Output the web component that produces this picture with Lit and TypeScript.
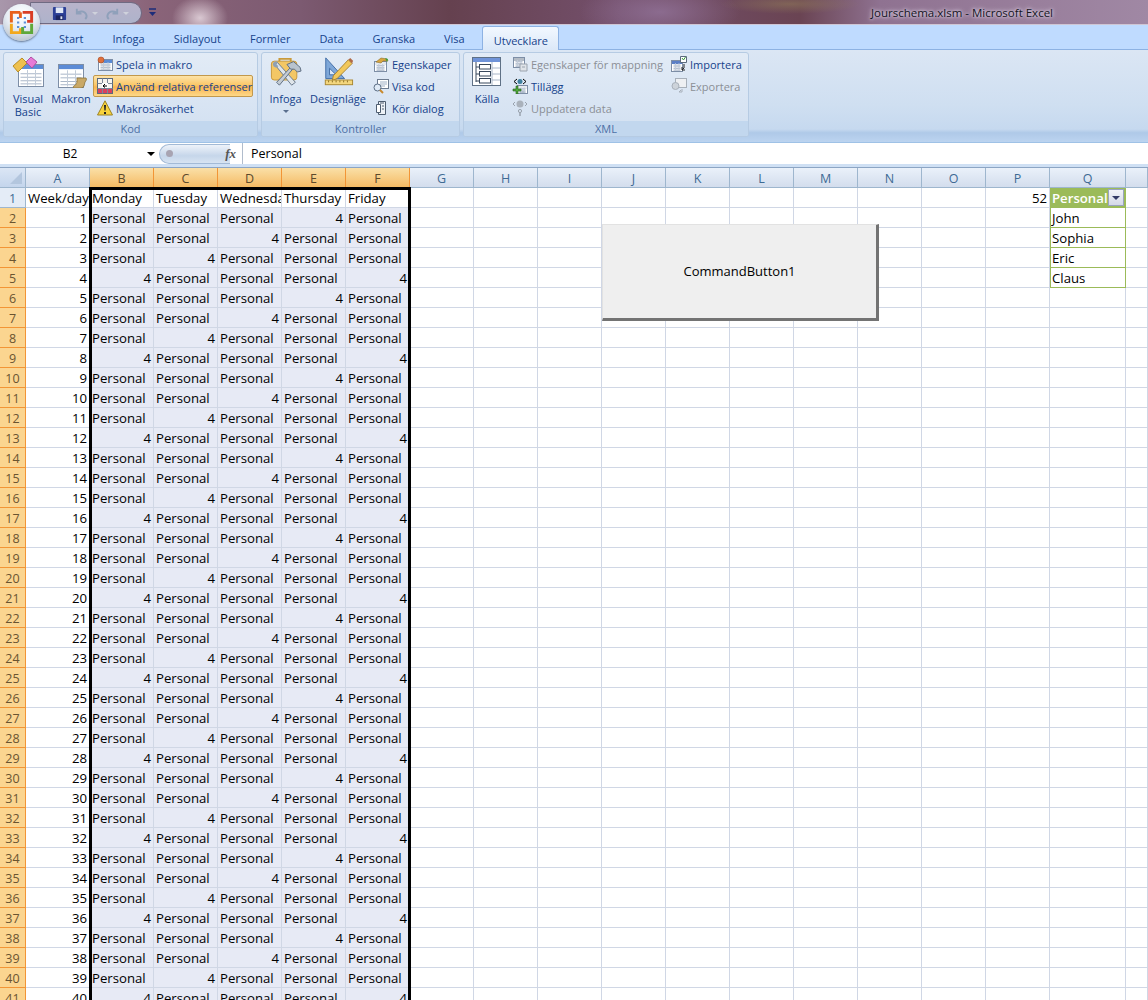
import { LitElement, html, css, svg } from "lit";
import { customElement } from "lit/decorators.js";

const COLS = "ABCDEFGHIJKLMNOPQR".split("");
const ROWS = 41;

const sheetGrid = (x: number, y: number, w: number, h: number, head = "#5b8bd6") => svg`
  <rect x=${x} y=${y} width=${w} height=${h} fill="#fff" stroke="#7d8ea6"/>
  <rect x=${x + 0.5} y=${y + 0.5} width=${w - 1} height=${Math.max(3, h * 0.18)} fill=${head}/>
  ${[0.42, 0.58, 0.74, 0.88].map((f) => svg`<path d="M${x + 2} ${y + h * f}H${x + w - 2}" stroke="#a9b6c8"/>`)}
  ${[0.36, 0.68].map((f) => svg`<path d="M${x + w * f} ${y + h * 0.25}V${y + h - 1}" stroke="#c2ccd9"/>`)}
`;

const icons: Record<string, unknown> = {
  vb: html`<svg class="big" viewBox="0 0 32 32">
    ${sheetGrid(6.5, 8.5, 25, 22)}
    <path d="M1 10 10 2l5 5-9 9z" fill="#eec04e" stroke="#b98d24"/>
    <path d="M14 6l5-5 6 5-5 6z" fill="#e77ad6" stroke="#b04fa4"/>
  </svg>`,
  macro: html`<svg class="big" viewBox="0 0 32 32">
    ${sheetGrid(3.5, 8.5, 25, 23)}
    <path d="M22 22h9c1 1 0 3-1 4l-1 4c-1 2-3 2-4 2h-6c-1 0-1-2 0-2 2-1 3-3 3-5 0-1 0-2 0-3z" fill="#c9a866" stroke="#8a7138" stroke-width=".8"/>
  </svg>`,
  infoga: html`<svg class="big" viewBox="0 0 34 32">
    <path d="M10 5V2h12v3" fill="none" stroke="#c99a3a" stroke-width="2"/>
    <rect x="1.500" y="4.500" width="27" height="20" rx="3" fill="#f3c765" stroke="#c6963a"/>
    <path d="M5 8l3-2 19 21-4 3z" fill="#dfe5ea" stroke="#66768a"/>
    <path d="M7 27 22 11l2 2L10 30z" fill="#c4ccd4" stroke="#5c6c80"/>
    <path d="M18 8l7-3 7 6 1 4-4 1-3-3-4 0z" fill="#b8c3ce" stroke="#5c6c80"/>
    <path d="M3 8a3.500 3.500 0 0 1 5-3L7 8l2 2a3.500 3.500 0 0 1-6-2z" fill="#8ea0b4"/>
  </svg>`,
  design: html`<svg class="big" viewBox="0 0 34 32">
    <path d="M4 1v22h20z" fill="#7ea7d8" stroke="#3f6ba5"/>
    <path d="M8 12v7h7z" fill="#dce8f6" stroke="#3f6ba5"/>
    <path d="M12 20 28 3l4 4-16 16-5 2z" fill="#f2c85b" stroke="#a8812c"/>
    <path d="M28 3l2-2 3 3-1 3z" fill="#b06a48"/>
    <rect x="3.500" y="24.500" width="29" height="5" fill="#f4d77f" stroke="#a8862f"/>
    <path d="M7 25v2M11 25v2M15 25v2M19 25v2M23 25v2M27 25v2" stroke="#8a6d22"/>
  </svg>`,
  source: html`<svg class="big" viewBox="0 0 32 32">
    <rect x="1.500" y="1.500" width="28" height="28" fill="#fff" stroke="#5f7186"/>
    <rect x="2" y="2" width="27" height="4" fill="#6f93d8"/>
    <path d="M21 6v23M21 12h8M21 18h8M21 24h8" stroke="#a9b6c8"/>
    <path d="M5 6v20M5 11h3M5 18h3M5 25h3" stroke="#39485c" fill="none"/>
    <rect x="8.500" y="8.500" width="11" height="4.500" fill="#fff" stroke="#39485c"/>
    <rect x="8.500" y="15.500" width="11" height="4.500" fill="#fff" stroke="#39485c"/>
    <rect x="8.500" y="22.500" width="11" height="4.500" fill="#fff" stroke="#39485c"/>
  </svg>`,
  rec: html`<svg class="small" viewBox="0 0 16 16">
    ${sheetGrid(1.5, 3.5, 14, 11)}<circle cx="4" cy="4" r="3" fill="#e0703c" stroke="#a84a20" stroke-width=".6"/>
  </svg>`,
  rel: html`<svg class="small" viewBox="0 0 16 16">
    <rect x=".5" y=".5" width="15" height="15" fill="#f6f3ee" stroke="#5a6a7e"/>
    <path d="M.5 5.500h15M.5 10.500h15M5.500 .5v15M10.500 .5v15" stroke="#7b8798"/>
    <rect x="1" y="11" width="4" height="4" fill="#d8405e"/><rect x="6" y="11" width="4" height="4" fill="#d8405e"/><rect x="11" y="11" width="4" height="4" fill="#d8405e"/>
    <rect x="5" y="5" width="6" height="5" fill="#fff"/><path d="M10 8H6l2-2M6 8l2 1.500" stroke="#000" fill="none"/>
  </svg>`,
  warn: html`<svg class="small" viewBox="0 0 16 16">
    <path d="M8 .8 15.500 15H.5z" fill="#f7d23c" stroke="#9c8326"/><path d="M7 5h2l-.4 5.500h-1.200zM7 12h2v2H7z" fill="#222"/>
  </svg>`,
  props: html`<svg class="small" viewBox="0 0 16 16">
    ${sheetGrid(1.5, 5.5, 12, 10, "#e4e9f0")}<path d="M3 6l5-4 6 1 1 2-5 0-2 2z" fill="#d9a63f" stroke="#8d6d25" stroke-width=".6"/><path d="M12 2l3 1-1 3" fill="#3e9d3e"/>
  </svg>`,
  code: html`<svg class="small" viewBox="0 0 16 16">
    <rect x="4.500" y="1.500" width="11" height="9" fill="#fff" stroke="#6d7c90"/><path d="M7 4h7M7 6h7M7 8h5" stroke="#9fb0c5"/>
    <circle cx="4.500" cy="9.500" r="3.500" fill="#dfeaf6" stroke="#5d6f86"/><path d="M7 12l3 3" stroke="#c98a2c" stroke-width="2"/>
  </svg>`,
  dlg: html`<svg class="small" viewBox="0 0 16 16">
    <path d="M5.500 1.500h7v13h-7z" fill="#eef2f6" stroke="#4e5d70"/><path d="M3.500 4.500h4v8h-4z" fill="#fff" stroke="#4e5d70"/><path d="M7 3h4M9 6h2M9 9h2" stroke="#4e5d70"/>
  </svg>`,
  map: html`<svg class="small" viewBox="0 0 16 16">
    ${sheetGrid(1.5, 1.5, 11, 10, "#b4bcc6")}<path d="M8 8h7v7H8z" fill="#dfe3e8" stroke="#9aa3ae"/><path d="M10 11h3" stroke="#9aa3ae"/>
  </svg>`,
  addin: html`<svg class="small" viewBox="0 0 16 16">
    <path d="M2 3.500 5 1M2 3.500 5 6M14 3.500 11 1M14 3.500 11 6" stroke="#000" fill="none"/><circle cx="8" cy="3.500" r="2.500" fill="#3f7f9e"/>
    ${sheetGrid(5.5, 7.5, 10, 8, "#e7ebf0")}
    <path d="M1 11h3V8h2v3h3v2H6v3H4v-3H1z" fill="#4fa73a" stroke="#245e1b" stroke-width=".6"/>
  </svg>`,
  refresh: html`<svg class="small" viewBox="0 0 16 16">
    <path d="M3 2 1 4l2 2M13 2l2 2-2 2" stroke="#9aa3ae" fill="none"/><circle cx="8" cy="4" r="3.500" fill="#aab2bc"/><circle cx="8" cy="11" r="1.600" fill="none" stroke="#9aa3ae"/><path d="M8 12.500V16" stroke="#9aa3ae" stroke-width="1.500"/>
  </svg>`,
  imp: html`<svg class="small" viewBox="0 0 16 16">
    ${sheetGrid(0.5, 4.5, 11, 11, "#5b7fc6")}<path d="M9.500 .5h6v6h-6z" fill="#fff" stroke="#5b6a7c"/><path d="M11 2l1.500 2 2-3" stroke="#3c9a3c" fill="none"/><path d="M13 8v4l-2 2M11 11v3h3" stroke="#222" fill="none"/>
  </svg>`,
  exp: html`<svg class="small" viewBox="0 0 16 16">
    <rect x="4.500" y=".5" width="11" height="9" fill="#eef0f3" stroke="#a8b0ba"/><circle cx="4.500" cy="8" r="3.500" fill="#cdd3da" stroke="#a8b0ba"/><path d="M11 11v3H8M8 14l2-2" stroke="#a8b0ba" fill="none"/>
  </svg>`,
};

const corner = (name: string) => icons[name];

@customElement("app-root")
export class AppRoot extends LitElement {
  static styles = css`
    :host { display: block; width: 1148px; height: 1000px; overflow: hidden; position: relative; background: #fff; font-family: "Open Sans", "Noto Sans", sans-serif; color: #000; }
    * { box-sizing: border-box; }

    .title { height: 25px; position: relative; display: flex; align-items: center; justify-content: flex-end; padding: 0 95px 0 0;
      background:
        radial-gradient(28px 22px at 200px 18px, rgba(232,218,226,.85), rgba(232,218,226,0) 100%),
        radial-gradient(70px 10px at 790px 4px, rgba(150,130,90,.5), transparent),
        radial-gradient(80px 30px at 660px 12px, rgba(150,120,160,.7), transparent),
        linear-gradient(90deg, #a897ab 0, #9a7f97 60px, #8a6479 150px, #7c5a71 300px, #65414f 450px, #74506c 620px, #6a4453 800px, #8f7291 880px, #a088a4 1148px);
      border-bottom: 1px solid #cfc6d4; }
    .doc { font-size: 11.500px; color: #14141e; text-shadow: 0 0 5px #e8dff0, 0 0 3px #e8dff0; white-space: pre; }
    .qat { position: absolute; left: 30px; top: 2px; width: 112px; height: 22px; border-radius: 0 11px 11px 0; background: linear-gradient(#b8b3ca, #aeb3cb); border: 1px solid #6f6a82; display: flex; align-items: center; padding-left: 21px; }
    .qat svg { width: 15px; height: 15px; flex: none; }
    .qat .undo { margin-left: 7px; }
    .qat .redo { margin-left: 5px; }
    .qat .drop { width: 10px; height: 10px; margin-left: 1px; }
    .more { position: absolute; left: 148px; top: 8px; width: 9px; height: 10px; }

    .orb { position: absolute; left: 3px; top: 4px; width: 37px; height: 37px; border-radius: 50%; z-index: 5; background: radial-gradient(circle at 50% 30%, #fff 0, #e8eef5 45%, #b8c2cd 85%, #8f9aa8 100%); box-shadow: 0 1px 2px rgba(40,50,70,.6); display: flex; align-items: center; justify-content: center; }
    .orb svg { width: 27px; height: 27px; }

    .tabs { height: 25px; background: #bfdbff; display: flex; align-items: flex-end; padding-left: 44.500px; border-bottom: 1px solid #8db2e3; font-size: 11px; color: #15428b; }
    .tab { padding: 0 14.500px; height: 24px; line-height: 27px; white-space: nowrap; }
    .tab.active { margin-left: 3px; padding: 0 10.500px; height: 24px; margin-bottom: -1px; border: 1px solid #8db2e3; border-bottom: 0; border-radius: 3px 3px 0 0; background: linear-gradient(#f2f8ff, #dbe8f8); }

    .ribbon { height: 92px; padding: 2px 0 0 3px; display: flex; gap: 3px; background: linear-gradient(#dbe6f4, #cfdff1 60%, #c6d9ef 86%, #afc9e8 90%, #bcd4f0); font-size: 11px; color: #15428b; }
    .group { height: 85px; border: 1px solid #b6cbe3; border-radius: 3px; display: flex; flex-direction: column; background: linear-gradient(#e2ebf6, #d2e0f1); }
    .group.kod { width: 255px; } .group.ctl { width: 199px; } .group.xml { width: 286px; }
    .body { height: 68px; display: flex; }
    .cap { height: 15px; line-height: 16px; text-align: center; background: #c2d7ee; color: #4d70a5; font-size: 11px; border-radius: 0 0 2px 2px; }
    .kod .body { padding-left: 4px; } .ctl .body { padding-left: 2px; } .xml .body { padding-left: 3px; }

    .large { display: flex; flex-direction: column; align-items: center; padding-top: 3px; white-space: nowrap; line-height: 13px; text-align: center; flex: none; }
    .large .big { height: 32px; margin-bottom: 4px; width: 32px; }
    .large.w-vb { width: 40px; } .large.w-mac { width: 46px; }
    .large.w-inf { width: 43px; } .large.w-des { width: 62px; } .large.w-src { width: 40px; }
    .arrow { width: 0; height: 0; border: 3px solid transparent; border-top-color: #5a6f8e; border-bottom: 0; margin-top: 5px; }
    .stack { display: flex; flex-direction: column; flex: none; }
    .stack.s-kod { margin-left: -1px; width: 160px; }
    .stack.s-ctl { width: 84px; }
    .stack.s-xml1 { margin-left: 1px; width: 159px; }
    .stack.s-xml2 { width: 76px; }
    .item { height: 22px; display: flex; align-items: center; gap: 3px; padding-left: 3px; white-space: nowrap; border: 1px solid transparent; border-radius: 2px; }
    .item .small { width: 16px; height: 16px; flex: none; }
    .item.on { background: linear-gradient(#fde3a8, #fbc768 45%, #f9b552 55%, #fdd888); border-color: #c2984c; }
    .item.off { color: #8b8f96; }

    .fbar { height: 26px; background: #cfe0f4; border-top: 1px solid #9fc2e6; border-bottom: 1px solid #8ca5c4; display: flex; align-items: flex-start; font-size: 12px; position: relative; }
    .namebox { width: 158px; height: 21px; background: #fff; position: relative; text-align: center; padding-right: 18px; line-height: 21px; }
    .namebox::after { content: ""; position: absolute; right: 3px; top: 9px; border: 4px solid transparent; border-top-color: #000; border-bottom: 0; }
    .fx { width: 85px; height: 21px; background: #fff; display: flex; align-items: center; justify-content: flex-end; padding-right: 6px; border-right: 1px solid #b0bccc; position: relative; }
    .pill { position: absolute; left: 1px; right: 12px; top: 1px; bottom: 0; border-radius: 10px 0 0 10px; background: linear-gradient(#eef3fa, #c6d6ea 60%, #d8e4f2); border: 1px solid #a3bad6; border-right: 0; }
    .pill::before { content: ""; position: absolute; left: 6px; top: 5px; width: 7px; height: 7px; border-radius: 50%; background: #a8a4b2; }
    .fxt { position: relative; font: italic bold 13px "Liberation Serif", serif; color: #555; }
    .ftext { flex: 1; height: 21px; background: #fff; line-height: 21px; padding-left: 8px; font-size: 12.500px; }

    .sheet { position: relative; display: grid; grid-template-columns: 26px repeat(16, 64px) 76px 22px; grid-auto-rows: 20px; font-size: 13.200px; line-height: 19px; }
    .c { border-right: 1px solid #d0d7e5; border-bottom: 1px solid #d0d7e5; padding: 1px 2px 0; overflow: hidden; white-space: nowrap; background: #fff; }
    .c.n { text-align: right; }
    .c.f { background: #e7eaf5; }
    .ch { height: 20px; text-align: center; font-size: 12.500px; color: #3e6a94; border-right: 1px solid #9eb6ce; border-bottom: 1px solid #9eb6ce; background: linear-gradient(#eaf1fa, #d3dded); padding: 0; line-height: 21px; }
    .ch.sel { background: linear-gradient(#fae0a8, #f5bb64); color: #5c4a2c; border-color: #f29536; }
    .rh { text-align: center; font-size: 12.500px; color: #3e6a94; background: #e4ecf7; border-right: 1px solid #9eb6ce; border-bottom: 1px solid #9eb6ce; line-height: 21px; }
    .rh.sel { background: #fbd590; color: #6a5430; border-color: #f29536; }
    .corner { background: linear-gradient(#dbe6f5, #c4d5ec); border-right: 1px solid #9eb6ce; border-bottom: 1px solid #9eb6ce; position: relative; }
    .corner::after { content: ""; position: absolute; right: 3px; bottom: 3px; border-style: solid; border-width: 0 0 12px 12px; border-color: transparent transparent #b3c6de transparent; }
    .thead { background: #9bbb59; color: #fff; font-weight: 600; border-color: #9bbb59; position: relative; }
    .tcell { border-color: #9bbb59; border-left: 1px solid #9bbb59; padding-left: 1px; }
    .filter { position: absolute; right: 1px; top: 1px; width: 16px; height: 17px; border: 1px solid #9aa3c0; background: linear-gradient(#f2f4f9, #d4d9e8); }
    .filter::after { content: ""; position: absolute; left: 3px; top: 6px; border: 4px solid transparent; border-top-color: #333a66; border-bottom: 0; }
    .sel-box { position: absolute; left: 89px; top: 19px; width: 322px; height: 900px; border: 3px solid #000; pointer-events: none; }
    .btn { position: absolute; left: 602px; top: 56px; width: 277px; height: 97px; background: #efefef; border: 1px solid #e2e2e2; border-right: 3px solid #737373; border-bottom: 3px solid #737373; display: flex; align-items: center; justify-content: center; font-size: 13px; }
  `;

  private cell(col: number, row: number) {
    if (row === 1) {
      const head: Record<number, string> = { 0: "Week/day", 1: "Monday", 2: "Tuesday", 3: "Wednesday", 4: "Thursday", 5: "Friday", 15: "52" };
      if (col === 16) return html`<div class="c thead">Personal<span class="filter"></span></div>`;
      return html`<div class="c ${col === 15 ? "n" : ""}">${head[col] ?? ""}</div>`;
    }
    if (col === 0) return html`<div class="c n">${row - 1}</div>`;
    if (col >= 1 && col <= 5) {
      const w = (row - 2) % 4;
      const four = (w === 0 && col === 4) || (w === 1 && col === 3) || (w === 2 && col === 2) || (w === 3 && (col === 1 || col === 5));
      return html`<div class="c f ${four ? "n" : ""}">${four ? "4" : "Personal"}</div>`;
    }
    if (col === 16) {
      const names = ["John", "Sophia", "Eric", "Claus"];
      const nm = names[row - 2];
      return html`<div class="c ${nm ? "tcell" : ""}">${nm ?? ""}</div>`;
    }
    return html`<div class="c"></div>`;
  }

  render() {
    const tabs = ["Start", "Infoga", "Sidlayout", "Formler", "Data", "Granska", "Visa"];
    const rows = Array.from({ length: ROWS }, (_, i) => i + 1);
    return html`
      <div class="title">
        <div class="qat">
          <svg viewBox="0 0 16 16"><rect x="1" y="1" width="14" height="14" rx="1" fill="#2c3f96"/><rect x="4" y="1.500" width="8" height="6" fill="#dfe6f5"/><rect x="4" y="10" width="8" height="5" fill="#1c2560"/><rect x="9" y="11" width="2" height="3" fill="#dfe6f5"/></svg>
          <svg class="undo" viewBox="0 0 16 16"><path d="M3 3v5h5M3 8a6 6 0 0 1 10 1c1 2 0 4-1 5" fill="none" stroke="#8fa0ba" stroke-width="2"/></svg>
          <svg class="drop" viewBox="0 0 10 10"><path d="M2 4h6L5 7z" fill="#cfd2dc"/></svg>
          <svg class="redo" viewBox="0 0 16 16"><path d="M13 3v5H8M13 8a6 6 0 0 0-10 1c-1 2 0 4 1 5" fill="none" stroke="#8fa0ba" stroke-width="2"/></svg>
          <svg class="drop" viewBox="0 0 10 10"><path d="M2 4h6L5 7z" fill="#cfd2dc"/></svg>
        </div>
        <svg class="more" viewBox="0 0 9 10"><path d="M1 1h7" stroke="#1d2c7a" stroke-width="1.500"/><path d="M1 4h7L4.500 8z" fill="#1d2c7a"/></svg>
        <span class="doc">Jourschema.xlsm - Microsoft Excel</span>
      </div>
      <div class="orb">
        <svg viewBox="0 0 24 24" fill="none" stroke-width="2.600">
          <path d="M11 3H3v9" stroke="#e8611c"/>
          <path d="M11 3v5" stroke="#e8611c"/>
          <path d="M13 3h8v8h-4" stroke="#d93e26"/>
          <path d="M3 13v8h8v-4" stroke="#f2a81c"/>
          <path d="M21 13v8h-8v-5" stroke="#5fa83a"/>
          <path d="M8 8h2M14 8h2M8 12h2M14 12h2M8 16h2M14 16h2" stroke="#5c90d8" stroke-width="1.800"/>
        </svg>
      </div>
      <div class="tabs">
        ${tabs.map((t) => html`<div class="tab">${t}</div>`)}
        <div class="tab active">Utvecklare</div>
      </div>
      <div class="ribbon">
        <div class="group kod">
          <div class="body">
            <div class="large w-vb">${corner("vb")}<span>Visual<br />Basic</span></div>
            <div class="large w-mac">${corner("macro")}<span>Makron</span></div>
            <div class="stack s-kod">
              <div class="item">${corner("rec")}Spela in makro</div>
              <div class="item on">${corner("rel")}Använd relativa referenser</div>
              <div class="item">${corner("warn")}Makrosäkerhet</div>
            </div>
          </div>
          <div class="cap">Kod</div>
        </div>
        <div class="group ctl">
          <div class="body">
            <div class="large w-inf">${corner("infoga")}<span>Infoga</span><i class="arrow"></i></div>
            <div class="large w-des">${corner("design")}<span>Designläge</span></div>
            <div class="stack s-ctl">
              <div class="item">${corner("props")}Egenskaper</div>
              <div class="item">${corner("code")}Visa kod</div>
              <div class="item">${corner("dlg")}Kör dialog</div>
            </div>
          </div>
          <div class="cap">Kontroller</div>
        </div>
        <div class="group xml">
          <div class="body">
            <div class="large w-src">${corner("source")}<span>Källa</span></div>
            <div class="stack s-xml1">
              <div class="item off">${corner("map")}Egenskaper för mappning</div>
              <div class="item">${corner("addin")}Tillägg</div>
              <div class="item off">${corner("refresh")}Uppdatera data</div>
            </div>
            <div class="stack s-xml2">
              <div class="item">${corner("imp")}Importera</div>
              <div class="item off">${corner("exp")}Exportera</div>
            </div>
          </div>
          <div class="cap">XML</div>
        </div>
      </div>
      <div class="fbar">
        <div class="namebox">B2</div>
        <div class="fx"><div class="pill"></div><span class="fxt">fx</span></div>
        <div class="ftext">Personal</div>
      </div>
      <div class="sheet">
        <div class="corner"></div>
        ${COLS.map((c, i) => html`<div class="ch ${i >= 1 && i <= 5 ? "sel" : ""}">${c === "R" ? "" : c}</div>`)}
        ${rows.map(
          (r) => html`<div class="rh ${r >= 2 ? "sel" : ""}">${r}</div>
            ${COLS.map((_, c) => this.cell(c, r))}`
        )}
        <div class="sel-box"></div>
        <div class="btn">CommandButton1</div>
      </div>
    `;
  }
}
